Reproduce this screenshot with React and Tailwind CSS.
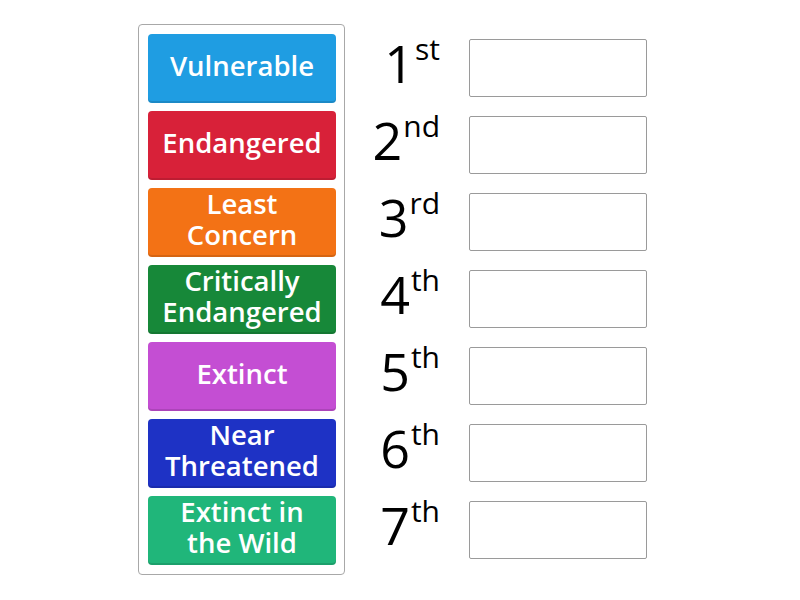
import React from "react";

const tiles = [
  { t: ["Vulnerable"], c: "bg-[#1f9de2]" },
  { t: ["Endangered"], c: "bg-[#d82139]" },
  { t: ["Least", "Concern"], c: "bg-[#f37215]" },
  { t: ["Critically", "Endangered"], c: "bg-[#178839]" },
  { t: ["Extinct"], c: "bg-[#c44ed3]" },
  { t: ["Near", "Threatened"], c: "bg-[#1e32c5]" },
  { t: ["Extinct in", "the Wild"], c: "bg-[#20b67a]" },
];

const labels = [
  ["1", "st"],
  ["2", "nd"],
  ["3", "rd"],
  ["4", "th"],
  ["5", "th"],
  ["6", "th"],
  ["7", "th"],
];

export default function App() {
  return (
    <div
      className="w-[800px] h-[600px] bg-white flex"
      style={{ fontFamily: '"Open Sans", sans-serif' }}
    >
      <div className="ml-[138px] mt-[24px] w-[207px] h-[551px] border border-[#a8a8a8] rounded-[4px] pt-[9px] pl-[9px] flex flex-col gap-[8px]">
        {tiles.map((x) => (
          <div
            key={x.t.join(" ")}
            className={`${x.c} w-[188px] h-[69px] rounded-[4px] shadow-[inset_0_-2px_0_rgba(0,0,0,0.12)] flex flex-col items-center justify-center text-center text-white font-semibold text-[27.5px] leading-[31px] px-[4px] pb-[7px] whitespace-nowrap`}
          >
            {x.t.map((l) => (
              <span key={l}>{l}</span>
            ))}
          </div>
        ))}
      </div>
      <div className="ml-[20px] mt-[39px] flex flex-col gap-[19px]">
        {labels.map(([n, s]) => (
          <div key={n} className="flex items-start h-[58px]">
            <div className="w-[75px] flex justify-end items-start text-black">
              <span className="text-[52px] leading-[52px] -mt-[2px]">{n}</span>
              <span className="text-[30px] leading-[30px] ml-[1px] -mt-[5px]">{s}</span>
            </div>
            <div className="ml-[29px] w-[178px] h-[58px] border border-[#9a9a9a] rounded-[2px] bg-white" />
          </div>
        ))}
      </div>
    </div>
  );
}
